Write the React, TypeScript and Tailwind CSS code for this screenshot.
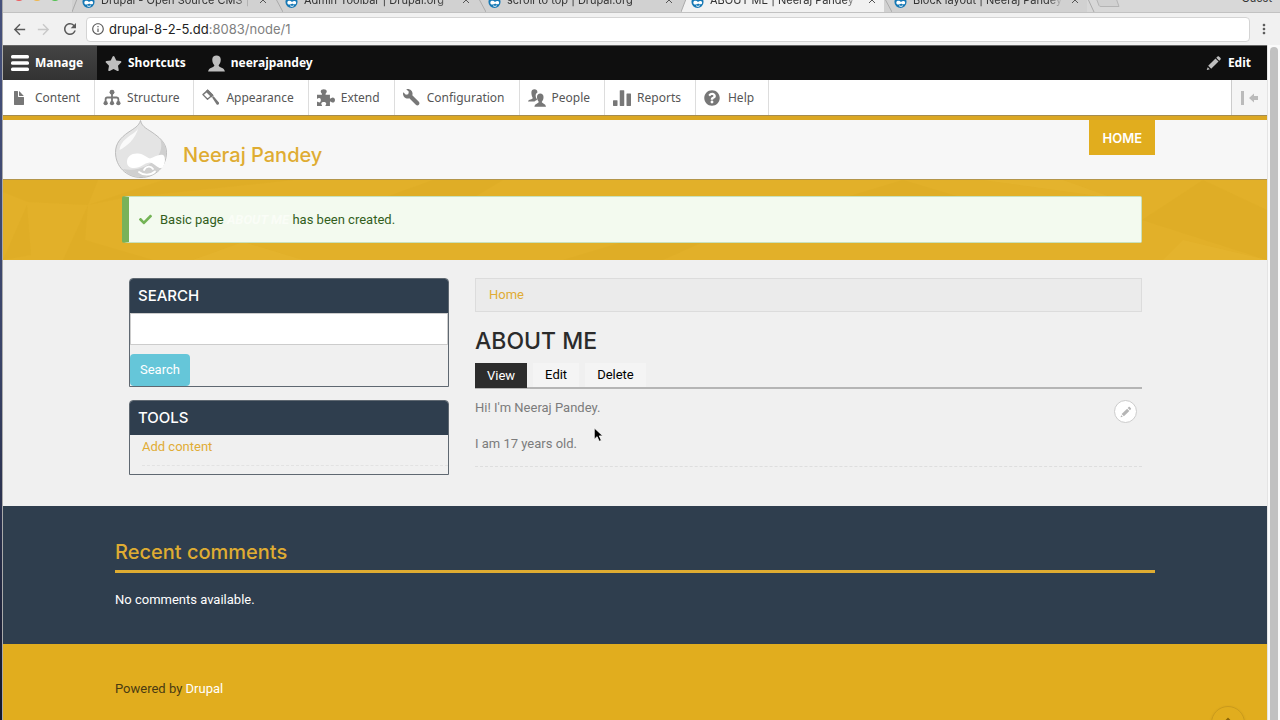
import { ReactNode } from "react";
import { FaCheck, FaQuestionCircle, FaStar, FaArrowUp } from "react-icons/fa";
import { MdArrowBack, MdArrowForward, MdRefresh, MdMoreVert, MdInfoOutline } from "react-icons/md";

type BrowserTab = { title: string; active?: boolean; edge: string };

const browserTabs: BrowserTab[] = [
  { title: "Drupal - Open Source CMS | Drupal.org", edge: "M0 13L5 0" },
  { title: "Admin Toolbar | Drupal.org", edge: "M1 0L8 13" },
  { title: "scroll to top | Drupal.org", edge: "M1 0L8 13" },
  { title: "ABOUT ME | Neeraj Pandey", active: true, edge: "M0 13L5 0" },
  { title: "Block layout | Neeraj Pandey", edge: "M1 0L8 13" },
];

const Favicon = () => (
  <svg viewBox="0 0 14 16" className="w-[13px] h-[15px] shrink-0">
    <path d="M7 0C8 3 13.500 4.500 13.500 9.500A6.500 6.500 0 0 1 .5 9.500C.5 4.500 6 3 7 0z" fill="#1678b5" />
    <path d="M2.500 10.500c0-3 3.500-2.500 5-1 1.500-1.300 4.500-1.800 4.500.8 0 2.500-3 2-4.300.8-1.700 1.500-5.200 2.200-5.200-.6z" fill="#fff" />
    <path d="M5.500 13.600c1.200 1 3 .9 4-.1" stroke="#fff" strokeWidth="1" fill="none" />
  </svg>
);

const Icon = ({ children, className = "w-4 h-4" }: { children: ReactNode; className?: string }) => (
  <svg viewBox="0 0 16 16" fill="currentColor" className={`shrink-0 ${className}`}>
    {children}
  </svg>
);

const Pencil = ({ className }: { className?: string }) => (
  <Icon className={className}>
    <path d="M14.545 3.042l-1.586-1.585c-.389-.389-1.025-.389-1.414 0l-1.293 1.293 3 3 1.293-1.293c.389-.389.389-1.026 0-1.415z" />
    <path d="M9.500 3.500l3 3-7.300 7.300-3-3z" />
    <path d="M1.700 12.200l2.100 2.100-2.800.8c-.2 0-.3-.1-.2-.3z" />
  </Icon>
);

const menuItems = [
  {
    label: "Content",
    icon: (
      <Icon>
        <path d="M12.502 7h-5c-.276 0-.502-.225-.502-.5v-5c0-.275-.225-.5-.5-.5h-3c-.275 0-.5.225-.5.5v13c0 .275.225.5.5.5h9.002c.275 0 .5-.225.5-.5v-7c0-.275-.225-.5-.5-.5z" />
        <path d="M8.502 6h4c.275 0 .34-.159.146-.354l-4.293-4.292c-.195-.195-.353-.129-.353.146v4c0 .275.225.5.5.5z" />
      </Icon>
    ),
  },
  {
    label: "Structure",
    icon: (
      <Icon className="w-[18px] h-[17px]">
        <circle cx="8" cy="3" r="2.300" />
        <circle cx="2" cy="13.300" r="2" />
        <circle cx="8" cy="13.300" r="2" />
        <circle cx="14" cy="13.300" r="2" />
        <path d="M2 13V9.500Q2 8 3.500 8h9Q14 8 14 9.500V13M8 4v9" fill="none" stroke="currentColor" strokeWidth="1.700" />
      </Icon>
    ),
  },
  {
    label: "Appearance",
    icon: (
      <Icon className="w-[17px] h-[17px]">
        <path d="M5.500 1.300L9.800 5.600 5.200 9.600.9 5.300z" fill="none" stroke="currentColor" strokeWidth="1.300" strokeLinejoin="round" />
        <path d="M5.300.3l5.700 5.700-2 2-5.700-5.700zM9.500 8l1.400-1.200 5 5.800c.9 1-.9 2.900-2.100 2z" />
      </Icon>
    ),
  },
  {
    label: "Extend",
    icon: (
      <Icon className="w-[18px] h-[18px]">
        <path d="M0 5h4.300C5 4.500 3.300 3.600 3.300 2.300 3.300 1 4.500.3 6 .3s2.700.7 2.700 2C8.700 3.600 7 4.500 7.700 5H11.500v3.300c.5.700 1.400-.8 2.500-.8s2 .9 2 2.300-.9 2.300-2 2.300-2-1.500-2.500-.8V15H7.700c-.7-.5.500-1.200.5-2 0-.9-.9-1.500-2.200-1.500s-2.200.6-2.200 1.500c0 .8 1.200 1.500.5 2H0v-3.500c.5-.6 1.200.4 2 .4.900 0 1.400-.8 1.400-1.900S2.900 8.100 2 8.100c-.8 0-1.500 1-2 .4z" />
      </Icon>
    ),
  },
  {
    label: "Configuration",
    icon: (
      <Icon className="w-[17px] h-[17px]">
        <path d="M14.916 12.086l-6.166-6.165c.15-.449.252-.921.252-1.421 0-2.485-2.016-4.500-4.502-4.500-.505 0-.981.102-1.434.255l2.431 2.431-.588 2.196-2.196.588-2.445-2.445c-.162.464-.268.956-.268 1.475 0 2.486 2.014 4.500 4.500 4.500.5 0 .972-.102 1.421-.251l6.167 6.165c.781.781 2.047.781 2.828 0s.781-2.047 0-2.828z" />
      </Icon>
    ),
  },
  {
    label: "People",
    icon: (
      <Icon className="w-[18px] h-[18px]">
        <path d="M3 3.200C3 1.300 4.100.3 5.700.3s2.700 1 2.700 2.700c-1.400.8-1.800 2-1.500 3.700.2 1.200.6 1.800 1.200 2.400-.2.900-1.400 1.200-2.300 1.900H0C.2 9.300 4.300 9.200 4.200 8 3.500 7 3 5 3 3.200z" />
        <path d="M8 7c0-1.900 1.200-3 2.900-3s2.900 1.100 2.900 3c0 1.700-.6 3.300-1.500 4.300-.1 1.700 3.500 1.500 3.700 4.400H5.700c.2-2.900 3.900-2.700 3.800-4.400C8.600 10.300 8 8.700 8 7z" />
      </Icon>
    ),
  },
  {
    label: "Reports",
    icon: (
      <Icon className="w-[18px] h-[18px]">
        <rect x="0" y="10" width="4" height="5" rx=".5" />
        <rect x="6" y="1" width="4" height="14" rx=".5" />
        <rect x="12" y="4" width="4" height="11" rx=".5" />
      </Icon>
    ),
  },
  { label: "Help", icon: <FaQuestionCircle size={16} /> },
];

const DrupalLogo = () => (
  <svg viewBox="0 0 52 58" className="w-[52px] h-[58px]">
    <path d="M25.500.5c1.500 7 7.500 8.500 14 13.500 7 5 12 10.500 12 18.500 0 14-11 25-25.500 25S.5 46.500.5 32.500C.5 23 6 17.500 13 12.500 19 8.500 24 6 25.500.5z" fill="#e4e4e4" stroke="#b0b0b0" strokeWidth=".8" />
    <path d="M45 18.500c4 4 6 8.500 6 14 0 14-10 24.500-25 24.500-8 0-14-3-18-8 14 3 28-3 35-13 4-6 4-12 2-17.500z" fill="#d0d0d0" />
    <path d="M23.500 7c-1 5-7 7-11 10.500C6.500 22 5 26 4.500 30 11 27 21 19 23.500 7z" fill="#fafafa" />
    <path d="M12 42c0-6 5-9 11-8.500 6 .3 8 4 12 5 4-.8 8-4.500 13-3.500 3 1 2.500 11-1.500 13-3.500 1-7-5-12-5.500C29 43 26 48 19 48c-4 0-7-2-7-6z" fill="#fff" />
    <path d="M29 50c2-4 7-4.500 9-1M24 52c4 3.500 12 3.500 16-.5" fill="none" stroke="#fff" strokeWidth="1.800" strokeLinecap="round" />
  </svg>
);

const BrowserChrome = () => (
  <div className="bg-[#f1f1f1] font-[Inter,sans-serif]">
    <div className="h-[13px] overflow-hidden bg-[#d8d8d8] flex items-end border-b border-[#c2c2c2]">
      <div className="w-[69px] h-[13px] shrink-0 flex gap-1.5 pl-2.5">
        <span className="w-3 h-3 -mt-2.5 rounded-full bg-[#ee5a5c]" />
        <span className="w-3 h-3 -mt-2.5 rounded-full bg-[#f0b74a]" />
        <span className="w-3 h-3 -mt-2.5 rounded-full bg-[#4fc14e]" />
      </div>
      {browserTabs.map((tab) => (
        <div
          key={tab.title}
          className={`w-[203px] h-8 min-w-0 flex items-end ${tab.active ? "bg-[#f1f1f1]" : "bg-[#d1d1d1]"}`}
        >
          <svg viewBox="0 0 8 13" className="w-2 h-[13px] shrink-0">
            {tab.active && <path d="M0 0H5L0 13z" fill="#d1d1d1" />}
            <path d={tab.edge} stroke="#aaa" fill="none" />
          </svg>
          <div className="flex-1 min-w-0 h-6 flex items-center pl-0.5 pr-1.5 gap-1.5">
            <Favicon />
            <span className="flex-1 min-w-0 overflow-hidden whitespace-nowrap text-[11px] text-[#333] mask-r-from-90%">
              {tab.title}
            </span>
            <button aria-label="Close tab" className="w-3 h-3 text-[#555]">
              <svg viewBox="0 0 12 12">
                <path d="M3 3l6 6M9 3l-6 6" stroke="currentColor" />
              </svg>
            </button>
          </div>
        </div>
      ))}
      <svg viewBox="0 0 36 13" className="w-9 h-[13px] shrink-0">
        <path d="M1 0L7 13" stroke="#aaa" />
        <path d="M8 -4L12 6.500Q12.500 7.500 14 7.500H32L28 -4z" fill="#d1d1d1" stroke="#b4b4b4" />
      </svg>
      <span className="ml-auto h-7 pr-2 flex items-center text-[11px] text-[#333]">Guest</span>
    </div>
    <div className="h-8 flex items-center pl-2 pr-2">
      <button aria-label="Back" className="w-6 text-[#5a5a5a]">
        <MdArrowBack size={17} />
      </button>
      <button aria-label="Forward" className="w-6 text-[#c8c8c8]">
        <MdArrowForward size={17} />
      </button>
      <button aria-label="Reload" className="w-[27px] pl-0.5 text-[#5a5a5a]">
        <MdRefresh size={18} />
      </button>
      <div className="flex-1 h-[25px] bg-white border border-[#d4d4d4] rounded flex items-center px-1 gap-1 text-[13px]">
        <MdInfoOutline size={14} color="#5a5a5a" />
        <p className="text-[#808080]">
          <span className="text-[#222]">drupal-8-2-5.dd</span>:8083/node/1
        </p>
      </div>
      <button aria-label="Menu" className="pl-1.5 text-[#5a5a5a]">
        <MdMoreVert size={16} />
      </button>
    </div>
  </div>
);

const AdminToolbar = () => (
  <div className="font-['Noto_Sans',sans-serif] text-xs">
    <nav className="h-[35px] bg-[#0f0f0f] border-t border-[#666] flex text-white font-bold">
      <a href="#" className="w-[94px] pl-2 flex items-center gap-1.5 bg-linear-to-b from-[#444] to-[#333]">
        <svg viewBox="0 0 18 18" className="w-[18px] h-[18px]" fill="currentColor">
          <rect y="1" width="18" height="3.500" rx="1.500" />
          <rect y="7.200" width="18" height="3.500" rx="1.500" />
          <rect y="13.500" width="18" height="3.500" rx="1.500" />
        </svg>
        Manage
      </a>
      <a href="#" className="pl-2 flex items-center gap-1.5">
        <FaStar size={17} color="#bebebe" />
        Shortcuts
      </a>
      <a href="#" className="pl-[22px] flex items-center gap-1.5">
        <Icon className="w-[17px] h-[17px] text-[#bebebe]">
          <path d="M4 4.200C4 1.800 5.700.5 8 .5s4 1.300 4 3.700c0 2.200-.7 4.100-2 5.400 0 2.200 5.500 2 5.900 5.900H.1C.5 11.600 6 11.800 6 9.600 4.700 8.300 4 6.400 4 4.200z" />
        </Icon>
        neerajpandey
      </a>
      <a href="#" className="ml-auto pr-4 flex items-center gap-1.5">
        <Pencil className="w-4 h-4 text-[#bebebe]" />
        Edit
      </a>
    </nav>
    <nav className="h-9 bg-white flex text-[#565656] border-b border-[#a58c50]">
      {menuItems.map((item) => (
        <a key={item.label} href="#" className="pl-2 pr-3.5 flex items-center border-r border-[#ddd]">
          <span className="w-6 text-[#777]">{item.icon}</span>
          {item.label}
        </a>
      ))}
      <button aria-label="Vertical orientation" className="ml-auto w-9 bg-[#f5f5f5] border-l border-[#ccc] text-[#bbb] flex items-center justify-center">
        <svg viewBox="0 0 18 14" className="w-[18px] h-3.5" fill="currentColor">
          <rect x="0" y="0" width="3" height="14" />
          <path d="M8 7l5-4.500V5h4v4h-4v2.500z" />
        </svg>
      </button>
    </nav>
  </div>
);

const Banner = () => (
  <div className="relative bg-[#e2b029] border-t border-[#b3954a] pt-4 pb-[17px]">
    <svg viewBox="0 0 1264 80" preserveAspectRatio="none" className="absolute inset-0 w-full h-full">
      <path d="M0 0H95L85 25 25 22 0 12zM85 25L160 0H290L120 18zM0 80L24 25 28 75zM85 25L82 60 150 80H60z" fill="#d9a821" opacity=".35" />
      <path d="M430 0L500 0 470 18H380zM560 80L620 62H700L660 80zM900 0L840 18H960zM1139 40L1200 0 1264 30V80z" fill="#d9a821" opacity=".35" />
      <path d="M190 80L240 62 300 80zM980 0H1060L1110 18zM1180 60L1264 80H1160z" fill="#e8b936" opacity=".35" />
    </svg>
    <div className="relative max-w-[1040px] mx-auto pl-[7px] pr-[13px]">
      <div className="h-[47px] flex items-center bg-[#f3faef] border border-[#c9e1bd] border-l-[7px] border-l-[#77b259] rounded-xs pl-2.5 text-[13px] text-[#325e1c]">
        <FaCheck size={13} color="#73b355" className="mr-2" />
        <p>
          Basic page <em className="font-bold text-[#fafdf7]">ABOUT ME</em> has been created.
        </p>
      </div>
    </div>
  </div>
);

const Block = ({ title, children }: { title: string; children: ReactNode }) => (
  <section className="border border-[#5f6871] rounded-t">
    <h2 className="h-[34px] px-2 flex items-center bg-[#2f3e4e] text-white font-[Inter,sans-serif] font-medium text-[15px] rounded-t-[3px]">
      {title}
    </h2>
    {children}
  </section>
);

const Sidebar = () => (
  <aside className="w-80 shrink-0 flex flex-col gap-[13px]">
    <Block title="SEARCH">
      <form onSubmit={(e) => e.preventDefault()}>
        <input
          type="search"
          aria-label="Search"
          className="block w-full h-8 bg-white border border-[#ccc] px-2 mb-[9px]"
        />
        <button type="submit" className="block h-8 px-2.5 bg-[#65c6d9] text-white rounded">
          Search
        </button>
      </form>
    </Block>
    <Block title="TOOLS">
      <ul className="pl-3 pb-2">
        <li className="h-[31px] pt-0.5 border-b border-dashed border-[#e2e2e2]">
          <a href="#" className="text-[#e0ac35]">
            Add content
          </a>
        </li>
      </ul>
    </Block>
  </aside>
);

const Article = () => (
  <main className="flex-1 min-w-0">
    <nav className="h-[34px] px-[13px] flex items-center bg-[#ebebeb] border border-[#dcdcdc]">
      <a href="#" className="text-[#e0ac35]">
        Home
      </a>
    </nav>
    <h1 className="mt-4 mb-2 font-[Inter,sans-serif] font-medium text-[23px] leading-[27px] text-[#2b2b2b]">ABOUT ME</h1>
    <nav className="h-[26px] flex gap-1.5 border-b-2 border-[#b5b5b5] text-black">
      <a href="#" className="h-[25px] px-3 flex items-center bg-[#2c2c2c] text-white">
        View
      </a>
      <a href="#" className="h-6 px-3 flex items-center bg-[#f4f4f4]">
        Edit
      </a>
      <a href="#" className="h-6 px-3 flex items-center bg-[#f4f4f4]">
        Delete
      </a>
    </nav>
    <div className="relative pt-[9px] pb-3 border-b border-dashed border-[#dedede] text-[#7c7c7c]">
      <p className="mb-4">Hi! I'm Neeraj Pandey.</p>
      <p>I am 17 years old.</p>
      <button
        aria-label="Open configuration options"
        className="absolute right-[5px] top-[11px] w-[23px] h-[23px] flex items-center justify-center bg-white border border-[#ccc] rounded-full text-[#b5b5b5]"
      >
        <Pencil className="w-3 h-3" />
      </button>
      <svg viewBox="0 0 12 18" className="absolute left-[118px] top-[38px] w-3 h-[17px]">
        <path d="M1 1v12l3-2.800 2.200 5 2.300-1-2.200-4.800H10z" fill="#000" stroke="#fff" strokeWidth=".8" />
      </svg>
    </div>
  </main>
);

export default function App() {
  return (
    <div className="min-h-screen flex flex-col bg-[#f0f0f0] font-[Roboto,sans-serif] text-[13px] leading-5">
      <div className="flex-1 flex">
        <div className="w-[3px] shrink-0 bg-linear-to-b from-[#46517c] via-[#3a4468] to-[#15182a] border-r border-[#aaa]" />
        <div className="flex-1 min-w-0 flex flex-col">
          <BrowserChrome />
          <div className="flex-1 flex">
            <div className="flex-1 min-w-0 flex flex-col">
              <AdminToolbar />
              <header className="bg-[#f7f7f7] border-t-4 border-[#dba723]">
                <div className="max-w-[1040px] h-[59px] mx-auto flex items-start">
                  <DrupalLogo />
                  <a
                    href="#"
                    className="self-end pl-4 pb-2.5 font-[Inter,sans-serif] font-medium text-[20px] leading-7 text-[#dfac32]"
                  >
                    Neeraj Pandey
                  </a>
                  <nav className="ml-auto">
                    <a
                      href="#"
                      className="block px-[13px] h-[35px] leading-9 bg-[#e1ad1e] text-white font-[Inter,sans-serif] font-semibold text-[13px]"
                    >
                      HOME
                    </a>
                  </nav>
                </div>
              </header>
              <Banner />
              <div className="bg-[#f0f0f0] pt-[18px] pb-[31px]">
                <div className="max-w-[1040px] mx-auto pl-3.5 pr-[13px] flex gap-[26px]">
                  <Sidebar />
                  <Article />
                </div>
              </div>
              <section className="bg-[#2f3e4e] text-white pt-8 pb-[34px]">
                <div className="max-w-[1040px] mx-auto">
                  <h2 className="font-[Inter,sans-serif] font-medium text-[20px] leading-7 pb-1 mb-[17px] border-b-[3px] border-[#dfac32] text-[#dfac32]">
                    Recent comments
                  </h2>
                  <p>No comments available.</p>
                </div>
              </section>
              <footer className="relative flex-1 overflow-hidden bg-[#e1ad1e] pt-[35px] pb-[21px]">
                <p className="max-w-[1040px] mx-auto text-[#4a3b12]">
                  Powered by{" "}
                  <a href="#" className="text-white">
                    Drupal
                  </a>
                </p>
                <button
                  aria-label="Scroll to top"
                  className="absolute right-[22px] -bottom-5 w-[34px] h-[34px] flex justify-center pt-2.5 rounded-full border border-[#c99a1c] shadow text-[#8a6508]"
                >
                  <FaArrowUp size={14} />
                </button>
              </footer>
            </div>
            <div className="w-[13px] shrink-0 bg-[#fafafa] border-l border-[#e4e4e4] px-0.5 pt-0.5 flex">
              <div className="w-2 rounded-t-full bg-[#c1c1c1]" />
            </div>
          </div>
        </div>
      </div>
    </div>
  );
}
